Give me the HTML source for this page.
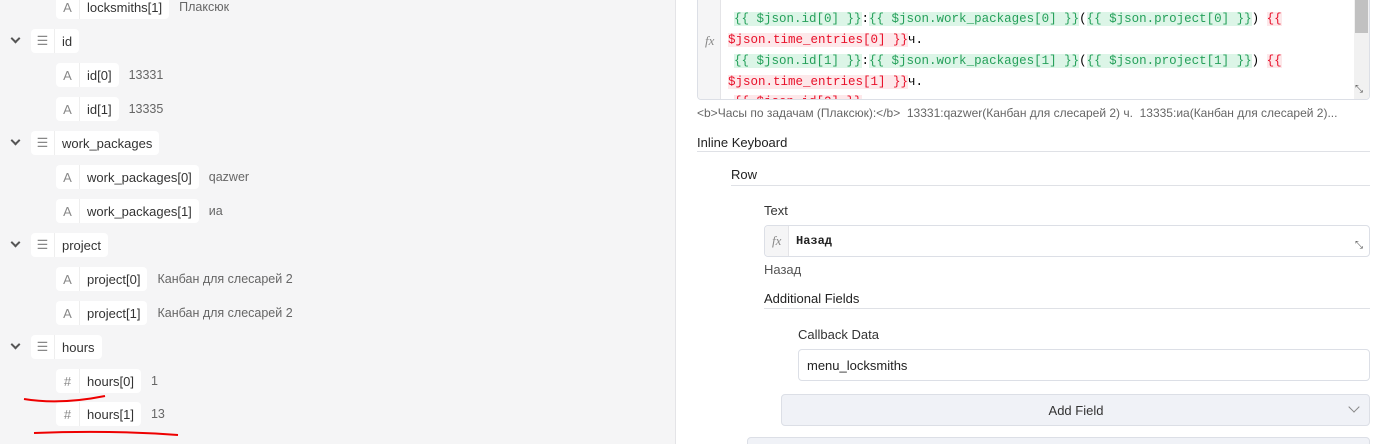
<!DOCTYPE html><html><head><meta charset="utf-8"><style>
html,body{margin:0;width:1380px;height:444px;overflow:hidden}
body{font-family:"Liberation Sans",sans-serif;position:relative;background:#fff}
.left{position:absolute;left:0;top:0;width:675px;height:444px;background:#f5f5f6;border-right:1px solid #e4e4e7}
.row{position:absolute;height:24px;display:flex;align-items:center;font-size:13px;color:#333}
.pill{display:flex;align-items:stretch;background:#fff;border-radius:4px;height:24px}
.ic{width:23px;border-right:1px solid #eee;display:flex;align-items:center;justify-content:center;color:#888;font-size:13px}
.lb{padding:0 7px;display:flex;align-items:center}
.val{margin-left:10px;color:#666;font-size:12.5px}
.chev{position:absolute;left:-19px;top:6px;width:5px;height:5px;border-right:2px solid #555;border-bottom:2px solid #555;transform:rotate(45deg)}
.abs{position:absolute}
.code{font-family:"Liberation Mono",monospace;font-size:12.5px;white-space:nowrap}
.g{background:#dcf5e7;color:#25a05a}.r{background:#fde8ea;color:#e8102a}
.lbl{position:absolute;font-size:13px;color:#333}
.line{position:absolute;height:1px;background:#dfe1e6}
.inp{position:absolute;border:1px solid #dcdfe6;border-radius:4px;background:#fff;box-sizing:border-box}
</style></head><body>
<div class="left">
<div class="row" style="left:56px;top:-5px"><div class="pill"><div class="ic">A</div><div class="lb">locksmiths[1]</div></div><span class="val">Плаксюк</span></div>
<div class="row" style="left:31px;top:29px"><span class="chev"></span><div class="pill"><div class="ic">☰</div><div class="lb">id</div></div></div>
<div class="row" style="left:56px;top:63px"><div class="pill"><div class="ic">A</div><div class="lb">id[0]</div></div><span class="val">13331</span></div>
<div class="row" style="left:56px;top:97px"><div class="pill"><div class="ic">A</div><div class="lb">id[1]</div></div><span class="val">13335</span></div>
<div class="row" style="left:31px;top:131px"><span class="chev"></span><div class="pill"><div class="ic">☰</div><div class="lb">work_packages</div></div></div>
<div class="row" style="left:56px;top:165px"><div class="pill"><div class="ic">A</div><div class="lb">work_packages[0]</div></div><span class="val">qazwer</span></div>
<div class="row" style="left:56px;top:199px"><div class="pill"><div class="ic">A</div><div class="lb">work_packages[1]</div></div><span class="val">иа</span></div>
<div class="row" style="left:31px;top:233px"><span class="chev"></span><div class="pill"><div class="ic">☰</div><div class="lb">project</div></div></div>
<div class="row" style="left:56px;top:267px"><div class="pill"><div class="ic">A</div><div class="lb">project[0]</div></div><span class="val">Канбан для слесарей 2</span></div>
<div class="row" style="left:56px;top:301px"><div class="pill"><div class="ic">A</div><div class="lb">project[1]</div></div><span class="val">Канбан для слесарей 2</span></div>
<div class="row" style="left:31px;top:335px"><span class="chev"></span><div class="pill"><div class="ic">☰</div><div class="lb">hours</div></div></div>
<div class="row" style="left:56px;top:369px"><div class="pill"><div class="ic">#</div><div class="lb">hours[0]</div></div><span class="val">1</span></div>
<div class="row" style="left:56px;top:402px"><div class="pill"><div class="ic">#</div><div class="lb">hours[1]</div></div><span class="val">13</span></div>
<svg class="abs" style="left:0;top:0" width="675" height="444"><path d="M24 399 Q60 405 105 396" stroke="#e00" stroke-width="2" fill="none"/><path d="M34 433 Q110 430 178 435" stroke="#e00" stroke-width="2" fill="none"/></svg>
</div>
<div class="inp" style="left:697px;top:-5px;width:673px;height:105px;overflow:hidden">
<div class="abs" style="left:0;top:0;width:22px;height:105px;background:#f5f5f6;border-right:1px solid #e4e4e7"></div>
<div class="abs" style="left:7px;top:37px;font-family:'Liberation Serif',serif;font-style:italic;color:#888;font-size:13px">fx</div>
<div class="abs code" style="left:36px;top:16px"><span class="g">{{ $json.id[0] }}</span>:<span class="g">{{ $json.work_packages[0] }}</span>(<span class="g">{{ $json.project[0] }}</span>) <span class="r">{{ </span></div>
<div class="abs code" style="left:30px;top:37px"><span class="r">$json.time_entries[0] }}</span>ч.</div>
<div class="abs code" style="left:36px;top:58px"><span class="g">{{ $json.id[1] }}</span>:<span class="g">{{ $json.work_packages[1] }}</span>(<span class="g">{{ $json.project[1] }}</span>) <span class="r">{{ </span></div>
<div class="abs code" style="left:30px;top:79px"><span class="r">$json.time_entries[1] }}</span>ч.</div>
<div class="abs code" style="left:36px;top:99px"><span class="r">{{ $json.id[2] }}</span></div>
<div class="abs" style="left:656px;top:0;width:15px;height:105px;background:#f1f1f1"></div>
<div class="abs" style="left:657px;top:0;width:13px;height:37px;background:#c1c1c1"></div>
<div class="abs" style="left:657px;top:88px;font-size:10px;color:#555">⤡</div>
</div>
<div class="lbl" style="left:697px;top:106px;font-size:12px;color:#666">&lt;b&gt;Часы по задачам (Плаксюк):&lt;/b&gt;&nbsp; 13331:qazwer(Канбан для слесарей 2) ч.&nbsp; 13335:иа(Канбан для слесарей 2)...</div>
<div class="lbl" style="left:697px;top:135px;color:#222">Inline Keyboard</div><div class="line" style="left:697px;top:151px;width:673px"></div>
<div class="lbl" style="left:731px;top:167px;color:#222">Row</div><div class="line" style="left:731px;top:185px;width:639px"></div>
<div class="lbl" style="left:764px;top:203px">Text</div>
<div class="inp" style="left:764px;top:225px;width:606px;height:32px">
<div class="abs" style="left:0;top:0;width:23px;height:30px;background:#f5f5f6;border-right:1px solid #e4e4e7;border-radius:4px 0 0 4px"></div>
<div class="abs" style="left:7px;top:7px;font-family:'Liberation Serif',serif;font-style:italic;color:#888;font-size:13px">fx</div>
<div class="abs code" style="left:31px;top:8px;font-weight:bold;font-size:12px;color:#222">Назад</div>
<div class="abs" style="left:590px;top:14px;font-size:10px;color:#555">⤡</div></div>
<div class="lbl" style="left:764px;top:262px;color:#555">Назад</div>
<div class="lbl" style="left:764px;top:291px;color:#222">Additional Fields</div><div class="line" style="left:764px;top:308px;width:606px"></div>
<div class="lbl" style="left:798px;top:327px">Callback Data</div>
<div class="inp" style="left:798px;top:349px;width:572px;height:32px"><div class="abs" style="left:8px;top:8px;font-size:13px;color:#222">menu_locksmiths</div></div>
<div class="inp" style="left:781px;top:394px;width:589px;height:32px;background:#f0f2f7"><div class="abs" style="left:0;width:588px;text-align:center;top:8px;font-size:13px;color:#333">Add Field</div><div class="abs" style="left:568px;top:8px;width:7px;height:7px;border-right:1px solid #888;border-bottom:1px solid #888;transform:rotate(45deg)"></div></div>
<div class="inp" style="left:747px;top:437px;width:623px;height:20px;background:#f0f2f7"></div>
</body></html>
